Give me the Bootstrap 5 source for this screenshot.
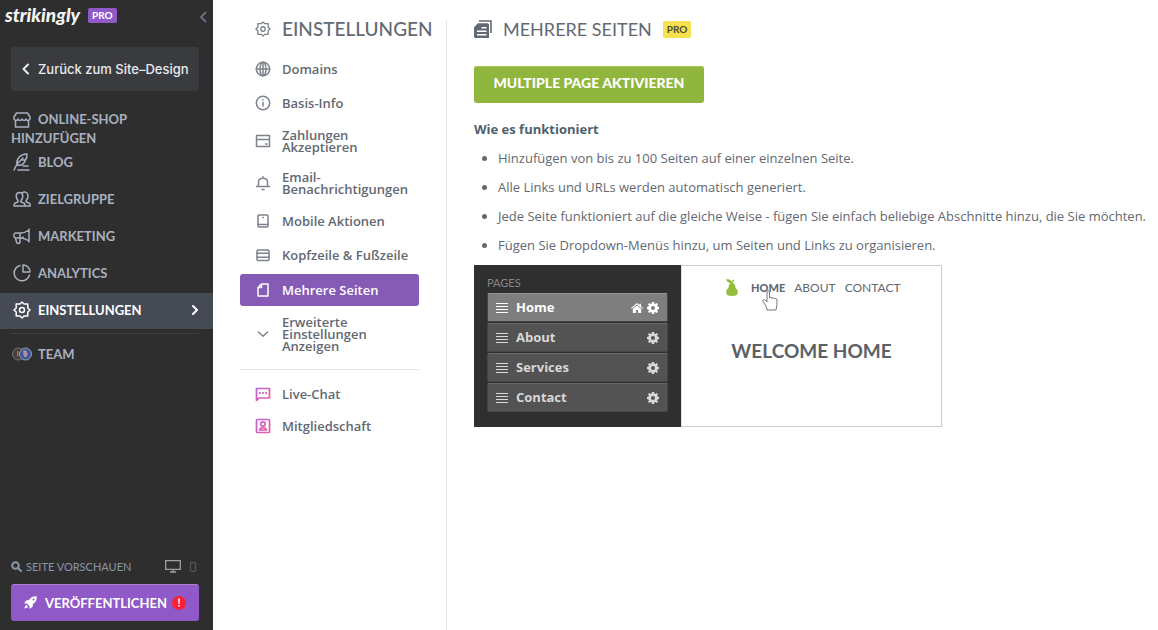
<!DOCTYPE html>
<html lang="de">
<head>
<meta charset="utf-8">
<meta name="viewport" content="width=device-width, initial-scale=1">
<title>Einstellungen – Mehrere Seiten</title>
<link href="https://cdn.jsdelivr.net/npm/bootstrap@5.3.0/dist/css/bootstrap.min.css" rel="stylesheet">
<style>
  :root { --display: Lato, "Liberation Sans", sans-serif; --ink: #636972; --side: #2e2e2e; }
  body { font-family: "Open Sans", "Liberation Sans", sans-serif; font-size: 13px; line-height: 19px; color: var(--ink); background: #fff; }
  svg { flex: none; }
  .ico { fill: none; stroke: currentColor; stroke-width: 1.5; stroke-linejoin: round; stroke-linecap: round; }

  /* Dark sidebar */
  .sidebar { width: 213px; background: var(--side); color: #a9b1c0; font-family: var(--display); }
  .side-head { height: 30px; padding: 0 5px; }
  .brand { font-size: 19px; font-weight: 900; font-style: italic; line-height: 22px; color: #f4f4f4; }
  .tag-pro { background: #9059c8; color: #fff; font-size: 10px; font-weight: 700; line-height: 15px; border-radius: 2px; padding: 0 4px; }
  .collapse-btn { color: #667080; }
  .back-btn { margin: 17px 14px 0 11px; padding: 11px 11px 11px 9px; background: #3a3b3f; color: #e8eaf0; border-radius: 3px; font: 500 13px/20px Inter, sans-serif; }
  .side-nav { margin-top: 17px; }
  .side-link { display: flex; align-items: center; gap: 7px; height: 36px; padding: 0 14px 2px 13px; margin-bottom: 1px; color: #a9b1c0; font-size: 13px; font-weight: 700; text-decoration: none; }
  .side-link.wrapped { display: block; height: auto; padding: 2px 14px 0 11px; margin-bottom: -3px; }
  .side-link.wrapped svg { margin: 0 7px 0 2px; vertical-align: -4px; }
  .side-link.active { background: #464a55; color: #fff; }
  .side-link.team { padding-left: 12px; gap: 6px; }
  .side-rule { margin: 4px 14px 3px 11px; border-top: 1px solid #3e3e40; }
  .preview-line { padding: 0 16px 0 11px; margin-bottom: 7px; font-size: 11px; color: #8a96a8; }
  .preview-line a { color: inherit; text-decoration: none; }
  .publish-wrap { padding: 0 14px 9px 11px; }
  .publish-btn { padding: 0 12px; height: 37px; background: #9059c8; color: #fff; border-top: 1px solid #a983d4; border-radius: 3px; font: 700 13px/20px var(--display); }

  /* Settings navigation */
  .settings { width: 234px; margin-top: 20px; padding: 0 27px; border-right: 1px solid #e3e4e6; }
  .page-title { font-family: var(--display); font-weight: 400; font-size: 18px; line-height: 17px; color: var(--ink); white-space: nowrap; }
  .settings-title { gap: 11px; padding-left: 15px; margin-bottom: 16px; }
  .settings-title .page-title { font-size: 19px; font-weight: 500; }
  .set-link { display: flex; align-items: center; gap: 11px; min-height: 32px; padding: 8px 10px 8px 15px; color: var(--ink); font-size: 13px; font-weight: 600; line-height: 12px; text-decoration: none; border-radius: 3px; }
  .set-link.active { margin-top: 1px; background: #855bb5; color: #fff; }
  .set-list { gap: 2px; }
  .set-rule { margin: 9px 0 8px; border-top: 1px solid #e6e6e8; }
  .set-link svg, .settings-title svg { color: #7d838b; }
  .set-link.active svg { color: #fff; }

  /* Content */
  .content { padding: 20px 10px 20px 27px; }
  .content-title { height: 18px; gap: 11px; }
  .tag-yellow { background: #f6e04f; color: #4c4a35; font: 700 10px/17px var(--display); padding: 0 4px; border-radius: 2px; }
  .activate-btn { width: 230px; height: 37px; margin-top: 28px; padding: 0 0 3px; background: #91b63e; color: #fff; border-radius: 3px; box-shadow: inset 0 1px 0 #a5cb4c; font: 900 14px/20px var(--display); }
  .how-title { font-size: 13px; font-weight: 700; line-height: 19px; color: #50616a; margin: 17px 0 10px; }
  .how-list { padding-left: 24px; }
  .how-list li { margin-bottom: 10px; }

  .demo { max-width: 468px; height: 162px; }
  .demo-side { width: 207px; background: #2f2f2f; padding: 8px 13px 0 13px; }
  .demo-caption { font: 400 11px/19px var(--display); color: #858585; margin-bottom: 1px; }
  .demo-row { height: 29px; margin-bottom: 1px; padding: 0 8px 0 8px; background: #535353; border: 1px solid #464646; border-top-color: #6b6b6b; border-radius: 2px; color: #d8d8d8; font-size: 13px; font-weight: 700; }
  .demo-row.current { background: #7e7e7e; border-top-color: #959595; color: #fff; }
  .demo-page { border: 1px solid #ccc; border-left-color: #ddd; font-family: var(--display); }
  .demo-menu { gap: 9px; font-size: 12px; line-height: 16px; padding: 13px 0 0 43px; }
  .demo-home { font-size: 11px; font-weight: 900; padding-left: 3px; }
  .demo-menu .pointer { left: 14px; top: 10px; }
  .demo-welcome { font-size: 19px; font-weight: 700; line-height: 22px; color: #5a6167; margin-top: 44px; }
</style>
</head>
<body>
<svg width="0" height="0" class="position-absolute" aria-hidden="true">
  <defs>
    <linearGradient id="pink" gradientUnits="userSpaceOnUse" x1="1" y1="1" x2="15" y2="15"><stop offset="0" stop-color="#b863dc"/><stop offset="1" stop-color="#f2589c"/></linearGradient>
    <symbol id="gear-line" viewBox="0 0 18 18"><path d="M9 1l2 2h3.800v4L17 9l-2.200 2v4H11l-2 2-2-2H3.200v-4L1 9l2.200-2V3H7z"/><circle cx="9" cy="9" r="2.500"/></symbol>
    <symbol id="gear-solid" viewBox="0 0 12 12"><path fill="currentColor" fill-rule="evenodd" d="M4.900 0h2.200l.3 1.600 1 .4L9.700 1 11 2.300l-.9 1.300.4 1 1.500.3v2.200l-1.500.3-.4 1 .9 1.300L9.700 11l-1.300-.9-1 .4L7.100 12H4.900l-.3-1.500-1-.4-1.300.9L1 9.700l.9-1.300-.4-1L0 7.100V4.900l1.500-.3.4-1L1 2.300 2.300 1l1.300.9 1-.4zM6 4a2 2 0 100 4 2 2 0 000-4z"/></symbol>
    <symbol id="bars" viewBox="0 0 12 10"><path stroke="currentColor" d="M0 .5h12M0 3.500h12M0 6.500h12M0 9.500h12"/></symbol>
  </defs>
</svg>

<div class="d-flex min-vh-100">
  <aside class="sidebar d-flex flex-column flex-shrink-0">
    <header class="side-head d-flex align-items-center">
      <span class="brand">strikingly</span>
      <span class="tag-pro ms-2">PRO</span>
      <button type="button" class="btn p-0 border-0 ms-auto lh-1 collapse-btn" aria-label="Seitenleiste einklappen">
        <svg class="ico" width="9" height="12" viewBox="0 0 9 12"><path stroke-width="1.800" d="M6.500 1.500L2 6l4.500 4.500"/></svg>
      </button>
    </header>

    <button type="button" class="btn back-btn d-flex align-items-center text-nowrap">
      <svg class="ico me-2" width="9" height="12" viewBox="0 0 9 12"><path stroke-width="2" d="M7 1.500L2.500 6 7 10.500"/></svg>Zurück zum Site–Design
    </button>

    <nav class="side-nav" aria-label="Hauptmenü">
      <a href="#" class="side-link wrapped"><svg class="ico" width="18" height="16" viewBox="0 0 18 16"><path d="M3.500 1h11L17 5v2c-1 2-3.300 2-4 0-.8 2-3.200 2-4 0-.8 2-3.200 2-4 0-.7 2-3 2-4 0V5zM2.500 9v6h13V9"/></svg>ONLINE-SHOP HINZUFÜGEN</a>
      <a href="#" class="side-link"><svg class="ico" width="18" height="18" viewBox="0 0 18 18"><path d="M1 17l3-6M4 12C3 6 7 1 14 1c0 2 0 4-1.500 6M4 12c4 1 7-1 8.500-5h-3M4 11l6-6M10 13h5M5 17h11"/></svg>BLOG</a>
      <a href="#" class="side-link"><svg class="ico" width="18" height="17" viewBox="0 0 18 17"><path d="M1 15c0-3 1-3 4-4v-1.500C3.500 8 3 6 3.300 4 4 .5 9 .5 9.700 4c.3 2-.2 4-1.700 5.500V11c3 1 4 1 4 4zM9 2c2-2 5.500-1 5.900 2 .3 2-.3 4-1.700 5.500V11c3 1 4 1 4 4H12"/></svg>ZIELGRUPPE</a>
      <a href="#" class="side-link"><svg class="ico" width="18" height="18" viewBox="0 0 18 18"><path d="M16 2v13M16 3c-3 2-5 3-8 3H2C.5 7 .5 10 2 11h6c3 0 5 1 8 3M7 6v9c0 2-3 2-3.500 0L2.500 11M7 11h3v-1"/></svg>MARKETING</a>
      <a href="#" class="side-link"><svg class="ico" width="18" height="18" viewBox="0 0 18 18"><path d="M7 1.500A7.800 7.800 0 1016.500 11M10 1v7h7a7 7 0 00-7-7z"/></svg>ANALYTICS</a>
      <a href="#" class="side-link active" aria-current="page"><svg class="ico" width="18" height="18"><use href="#gear-line"/></svg>EINSTELLUNGEN
        <svg class="ico ms-auto" width="8" height="10" viewBox="0 0 8 10"><path stroke-width="2" d="M2 1l4 4-4 4"/></svg></a>
      <div class="side-rule"></div>
      <a href="#" class="side-link team"><svg width="20" height="14" viewBox="0 0 20 14"><circle cx="6.500" cy="7" r="6" fill="#4b3c36" stroke="#6d7484"/><circle cx="13.500" cy="7" r="6" fill="#405696" stroke="#9aa2b8"/><path d="M11 4c2-2 5 0 4.500 4-1 3-4 3-4 0z" fill="#a98da4"/><path d="M5 4c2-1 2 5 0 6z" fill="#a07b65"/></svg>TEAM</a>
    </nav>

    <div class="mt-auto">
      <div class="preview-line d-flex align-items-center">
        <a href="#" class="d-flex align-items-center"><svg class="ico me-1" width="11" height="11" viewBox="0 0 11 11"><g stroke-width="2"><circle cx="4.500" cy="4.500" r="3.300"/><path d="M7.200 7.200L10 10"/></g></svg>SEITE VORSCHAUEN</a>
        <button type="button" class="btn p-0 pb-1 border-0 lh-1 ms-auto" aria-label="Desktop-Vorschau"><svg width="16" height="13" viewBox="0 0 16 13" fill="none" stroke="#a0a0a0"><path d="M.7.700h14.600v8.600H.700zM8 9.500V12M5 12h6" stroke-width="1.300"/></svg></button>
        <button type="button" class="btn p-0 pb-1 border-0 lh-1 ms-2" aria-label="Mobile Vorschau"><svg width="8" height="10" viewBox="0 0 8 10" fill="none" stroke="#50555c"><rect x="1.500" y=".7" width="5" height="8.600" rx="1" stroke-width="1.300"/></svg></button>
      </div>
      <div class="publish-wrap">
        <button type="button" class="btn publish-btn w-100 d-flex align-items-center text-nowrap">
          <svg width="13" height="13" viewBox="0 0 13 13" fill="currentColor"><path fill-rule="evenodd" d="M12.800.2C9 0 7 1 5 4L2 4.500.2 7.500l2.600-.1 2.800 2.800-.1 2.600 3-1.800L9 8c3-2 4-4 3.800-7.800zM9.500 2.500a1 1 0 110 2 1 1 0 010-2zM2.500 9C1 9.500.7 11 .5 12.500 2 12.300 3.500 12 4 10.500z"/></svg>
          <span class="ms-2">VERÖFFENTLICHEN</span>
          <svg class="ms-auto" width="14" height="14" viewBox="0 0 14 14"><circle cx="7" cy="7" r="7" fill="#fb2036"/><path d="M6.100 2.500h1.800L7.600 8H6.400zM6.200 9h1.600v1.600H6.200z" fill="#fff"/></svg>
        </button>
      </div>
    </div>
  </aside>

  <nav class="settings flex-shrink-0" aria-label="Einstellungen">
    <div class="settings-title d-flex align-items-center">
      <svg class="ico" width="16" height="16"><use href="#gear-line"/></svg>
      <h2 class="page-title m-0">EINSTELLUNGEN</h2>
    </div>
    <div class="set-list d-flex flex-column">
      <a href="#" class="set-link"><svg class="ico" width="16" height="16" viewBox="0 0 16 16"><circle cx="8" cy="8" r="6.700"/><ellipse cx="8" cy="8" rx="3" ry="6.700"/><path d="M1.300 8h13.400M8 1.300v13.400" /></svg>Domains</a>
      <a href="#" class="set-link"><svg class="ico" width="16" height="16" viewBox="0 0 16 16"><circle cx="8" cy="8" r="6.700"/><path d="M8 7.500V11M8 4.800v.2"/></svg>Basis-Info</a>
      <a href="#" class="set-link"><svg class="ico" width="16" height="16" viewBox="0 0 16 16"><path d="M1.500 2.500h13v11h-13zM1.500 6.500h13M10.500 11h1.500"/></svg>Zahlungen Akzeptieren</a>
      <a href="#" class="set-link"><svg class="ico" width="16" height="16" viewBox="0 0 16 16"><path d="M1.500 11.500h13M3.500 11V7c0-5 9-5 9 0v4M8 2V1.500M7 14.500h2"/></svg>Email-Benachrichtigungen</a>
      <a href="#" class="set-link"><svg class="ico" width="16" height="16" viewBox="0 0 16 16"><rect x="3" y="2" width="10" height="12" rx="1"/><path d="M3 11.500h10M7.800 4.500h.5"/></svg>Mobile Aktionen</a>
      <a href="#" class="set-link text-nowrap"><svg class="ico" width="16" height="16" viewBox="0 0 16 16"><rect x="2" y="3" width="12" height="10.500" rx="1"/><path d="M2 6.300h12M2 10.200h12"/></svg>Kopfzeile &amp; Fußzeile</a>
      <a href="#" class="set-link active" aria-current="page"><svg class="ico" width="16" height="16" viewBox="0 0 16 16"><path d="M6.500 2H13v12H3V5.500zM6.500 2v3.500H3"/></svg>Mehrere Seiten</a>
      <a href="#" class="set-link"><svg class="ico" width="16" height="16" viewBox="0 0 16 16"><path d="M3.500 6L8 10.300 12.500 6"/></svg>Erweiterte Einstellungen Anzeigen</a>
    </div>
    <div class="set-rule"></div>
    <a href="#" class="set-link"><svg class="ico" width="16" height="16" viewBox="0 0 16 16"><path stroke="url(#pink)" stroke-width="1.700" d="M1.500 2.500h13v9.500H4l-2.500 2.300z"/><path stroke="url(#pink)" stroke-width="1.800" d="M4.800 7h.3M7.900 7h.3M11 7h.3"/></svg>Live-Chat</a>
    <a href="#" class="set-link"><svg class="ico" width="16" height="16" viewBox="0 0 16 16"><g stroke="url(#pink)" stroke-width="1.700"><rect x="1.500" y="1.500" width="13" height="13" rx="1"/><circle cx="8" cy="6" r="2.200"/><path d="M4.500 12c.5-3 6.500-3 7 0z"/></g></svg>Mitgliedschaft</a>
  </nav>

  <main class="content flex-grow-1">
    <div class="content-title d-flex align-items-center">
      <svg width="18" height="18" viewBox="0 0 18 18"><path d="M5 1h12v12" fill="none" stroke="#636972" stroke-width="1.600"/><path fill="#636972" fill-rule="evenodd" d="M4 3.300h9.500a1.500 1.500 0 011.500 1.500V18H1.500A1.500 1.500 0 010 16.500V7.300zM7.500 7v1.500h5V7zM3 10.500v1.500h9.500v-1.500zM3 14v1.500h9.500V14z"/></svg>
      <h1 class="page-title mb-0">MEHRERE SEITEN</h1>
      <span class="tag-yellow">PRO</span>
    </div>
    <button type="button" class="btn activate-btn border-0 d-block">MULTIPLE PAGE AKTIVIEREN</button>
    <h3 class="how-title">Wie es funktioniert</h3>
    <ul class="how-list mb-0">
      <li>Hinzufügen von bis zu 100 Seiten auf einer einzelnen Seite.</li>
      <li>Alle Links und URLs werden automatisch generiert.</li>
      <li>Jede Seite funktioniert auf die gleiche Weise - fügen Sie einfach beliebige Abschnitte hinzu, die Sie möchten.</li>
      <li>Fügen Sie Dropdown-Menüs hinzu, um Seiten und Links zu organisieren.</li>
    </ul>

    <figure class="demo d-flex m-0">
      <div class="demo-side flex-shrink-0">
        <div class="demo-caption">PAGES</div>
        <div class="demo-row current d-flex align-items-center"><svg class="me-2" width="12" height="10"><use href="#bars"/></svg>Home
          <svg class="ms-auto" width="12" height="10" viewBox="0 0 12 10"><path fill="currentColor" d="M6 0l2.500 2V.800H10v2.500L12 5l-.6.700L6 1.400.6 5.700 0 5zM1.800 5.700L6 2.400l4.200 3.300V10H7V7H5v3H1.800z"/></svg>
          <svg class="ms-1" width="12" height="12"><use href="#gear-solid"/></svg></div>
        <div class="demo-row d-flex align-items-center"><svg class="me-2" width="12" height="10"><use href="#bars"/></svg>About<svg class="ms-auto" width="12" height="12"><use href="#gear-solid"/></svg></div>
        <div class="demo-row d-flex align-items-center"><svg class="me-2" width="12" height="10"><use href="#bars"/></svg>Services<svg class="ms-auto" width="12" height="12"><use href="#gear-solid"/></svg></div>
        <div class="demo-row d-flex align-items-center"><svg class="me-2" width="12" height="10"><use href="#bars"/></svg>Contact<svg class="ms-auto" width="12" height="12"><use href="#gear-solid"/></svg></div>
      </div>
      <div class="demo-page flex-grow-1">
        <div class="demo-menu d-flex align-items-center">
          <svg width="14" height="17" viewBox="0 0 14 17" fill="#93bd3b"><path d="M1 .5C4 0 6 1 6.500 2.500 8 .5 9 .5 9.500 1L7.600 3.500 10 6c.2 2 .5 3 2 4.500 1.500 2 1 4.500-1 6-2 .5-6 .5-8 0-2-1.500-2.500-4-1-6C3.500 9 3.800 8 4 6l1.700-2C3.500 4 2 2.500 1 .5z"/></svg>
          <span class="demo-home position-relative">HOME
            <svg class="pointer position-absolute" width="17" height="21" viewBox="0 0 17 21"><path fill="#fff" stroke="#777" d="M5 20l-.5-3L1 11.500c-.8-1.500.8-2.500 2-1.500l2 2V2c0-1.600 2.500-1.600 2.500 0v6c0-1 2.500-1 2.500.500 0-1 2.500-1 2.500.5 0-1 2.500-1 2.500 1v4.500L14 20z"/></svg></span>
          <span>ABOUT</span>
          <span>CONTACT</span>
        </div>
        <div class="demo-welcome text-center">WELCOME HOME</div>
      </div>
    </figure>
  </main>
</div>
<script src="https://cdn.jsdelivr.net/npm/bootstrap@5.3.0/dist/js/bootstrap.bundle.min.js"></script>
</body>
</html>
